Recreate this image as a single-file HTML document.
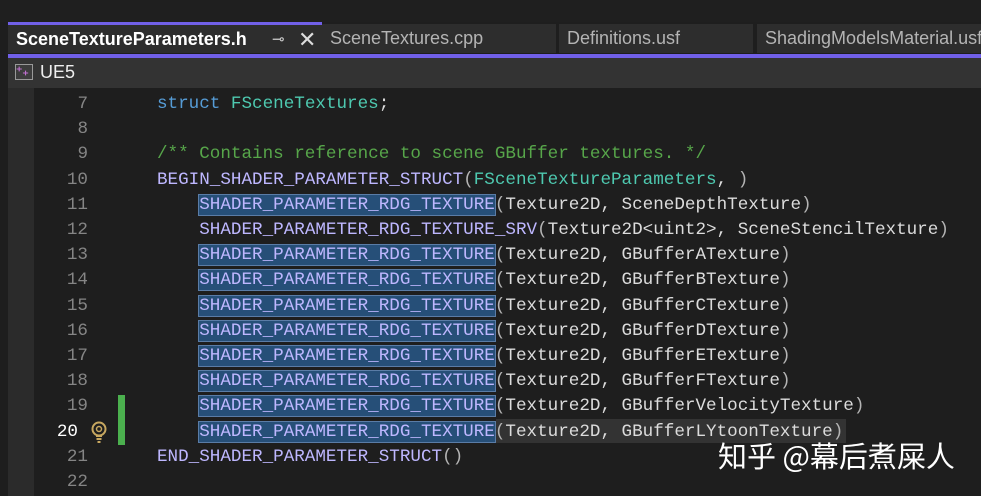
<!DOCTYPE html>
<html style="overflow:hidden;height:496px"><head><meta charset="utf-8"><style>
body{margin:0;width:981px;height:496px;background:#1e1e1e;overflow:hidden;position:relative;font-family:"Liberation Sans","Noto Sans CJK SC",sans-serif}
.a{position:absolute}
.tab{position:absolute;top:24px;height:29px;background:#2d2d2d;color:#b4b4b4;font-size:18px;line-height:29px;padding-left:8px;box-sizing:border-box;white-space:nowrap;overflow:hidden}
.code{position:absolute;left:0;top:92px;font-family:"Liberation Mono",monospace;font-size:17.6px;line-height:25.2px;white-space:pre}
.ln{position:absolute;left:40px;width:48px;text-align:right;color:#858585}
.tx{position:absolute;left:157px;color:#dcdcdc}
.k{color:#569cd6}.t{color:#4ec9b0}.c{color:#57a64a}.m{color:#beb7ff}.p{color:#b4b4b4}
.sel{background:#264f78;outline:1px solid #5a7ca6}
</style></head><body>
<div class="a" style="left:0;top:0;width:981px;height:22px;background:#1f1f1f"></div>
<div class="a" style="left:8px;top:22px;width:314px;height:3px;background:#7160e8"></div>
<div class="tab" style="left:8px;top:25px;height:28px;width:314px;background:#2d2d2d;color:#fff;font-weight:bold">SceneTextureParameters.h<span style="font-weight:normal;color:#ccc;position:absolute;left:264px;font-size:15px">⊸</span><span style="font-weight:normal;color:#ddd;position:absolute;left:290px;font-size:22px">✕</span></div>
<div class="tab" style="left:322px;width:234px">SceneTextures.cpp</div>
<div class="tab" style="left:559px;width:194px">Definitions.usf</div>
<div class="tab" style="left:757px;width:230px">ShadingModelsMaterial.usf</div>
<div class="a" style="left:8px;top:54px;width:973px;height:4px;background:#7160e8"></div>
<div class="a" style="left:8px;top:58px;width:973px;height:30px;background:#333"></div>
<div class="a" style="left:15px;top:64px;width:18px;height:16px;border:1px solid #999;background:#3c3c3c;box-sizing:border-box;color:#c070d0;font-size:12px;line-height:12px;font-weight:bold">⁺₊</div>
<div class="a" style="left:40px;top:62px;color:#eee;font-size:18px">UE5</div>
<div class="a" style="left:8px;top:88px;width:26px;height:408px;background:#2b2b2b"></div>
<div class="a" style="left:118px;top:395px;width:7px;height:50px;background:#4bb04e"></div>
<svg class="a" style="left:90px;top:421px" width="18" height="22" viewBox="0 0 18 22"><circle cx="9" cy="8" r="6.5" fill="none" stroke="#c8a860" stroke-width="2"/><circle cx="9" cy="8" r="2.5" fill="none" stroke="#c8a860" stroke-width="1.5"/><path d="M6 15h6M6.5 18h5M7.5 21h3" stroke="#c8a860" stroke-width="2"/></svg>
<div class="a" style="left:496px;top:419px;width:350px;height:24px;background:#333"></div>
<div class="code">
<div class="ln" style="top:0">7</div><div class="tx" style="top:0"><span class="k">struct</span> <span class="t">FSceneTextures</span>;</div>
<div class="ln" style="top:25.2px">8</div>
<div class="ln" style="top:50.4px">9</div><div class="tx c" style="top:50.4px">/** Contains reference to scene GBuffer textures. */</div>
<div class="ln" style="top:75.6px">10</div><div class="tx" style="top:75.6px"><span class="m">BEGIN_SHADER_PARAMETER_STRUCT</span><span class="p">(</span><span class="t">FSceneTextureParameters</span>, <span class="p">)</span></div>
<div class="ln" style="top:100.8px">11</div><div class="tx" style="top:100.8px">    <span class="m sel">SHADER_PARAMETER_RDG_TEXTURE</span><span class="p">(</span>Texture2D, SceneDepthTexture<span class="p">)</span></div>
<div class="ln" style="top:126px">12</div><div class="tx" style="top:126px">    <span class="m">SHADER_PARAMETER_RDG_TEXTURE_SRV</span><span class="p">(</span>Texture2D&lt;uint2&gt;, SceneStencilTexture<span class="p">)</span></div>
<div class="ln" style="top:151.2px">13</div><div class="tx" style="top:151.2px">    <span class="m sel">SHADER_PARAMETER_RDG_TEXTURE</span><span class="p">(</span>Texture2D, GBufferATexture<span class="p">)</span></div>
<div class="ln" style="top:176.4px">14</div><div class="tx" style="top:176.4px">    <span class="m sel">SHADER_PARAMETER_RDG_TEXTURE</span><span class="p">(</span>Texture2D, GBufferBTexture<span class="p">)</span></div>
<div class="ln" style="top:201.6px">15</div><div class="tx" style="top:201.6px">    <span class="m sel">SHADER_PARAMETER_RDG_TEXTURE</span><span class="p">(</span>Texture2D, GBufferCTexture<span class="p">)</span></div>
<div class="ln" style="top:226.8px">16</div><div class="tx" style="top:226.8px">    <span class="m sel">SHADER_PARAMETER_RDG_TEXTURE</span><span class="p">(</span>Texture2D, GBufferDTexture<span class="p">)</span></div>
<div class="ln" style="top:252px">17</div><div class="tx" style="top:252px">    <span class="m sel">SHADER_PARAMETER_RDG_TEXTURE</span><span class="p">(</span>Texture2D, GBufferETexture<span class="p">)</span></div>
<div class="ln" style="top:277.2px">18</div><div class="tx" style="top:277.2px">    <span class="m sel">SHADER_PARAMETER_RDG_TEXTURE</span><span class="p">(</span>Texture2D, GBufferFTexture<span class="p">)</span></div>
<div class="ln" style="top:302.4px">19</div><div class="tx" style="top:302.4px">    <span class="m sel">SHADER_PARAMETER_RDG_TEXTURE</span><span class="p">(</span>Texture2D, GBufferVelocityTexture<span class="p">)</span></div>
<div class="ln" style="top:327.6px;color:#fff;left:30px">20</div><div class="tx" style="top:327.6px">    <span class="m sel">SHADER_PARAMETER_RDG_TEXTURE</span><span class="p">(</span>Texture2D, GBufferLYtoonTexture<span class="p">)</span></div>
<div class="ln" style="top:352.8px">21</div><div class="tx" style="top:352.8px"><span class="m">END_SHADER_PARAMETER_STRUCT</span><span class="p">()</span></div>
<div class="ln" style="top:378px">22</div>
</div>
<div class="a" style="left:718px;top:436px;color:#fff;font-size:29px;font-family:'Noto Sans CJK SC',sans-serif;line-height:38px;white-space:nowrap">知乎 @幕后煮屎人</div>
</body></html>
